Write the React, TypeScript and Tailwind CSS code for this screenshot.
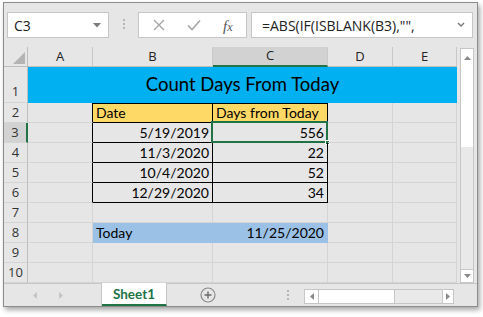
import clsx from "clsx";
import type { ReactNode } from "react";

const cellFont = "font-['Lato','Liberation_Sans',sans-serif] text-[14px] text-black";
const uiFont = "font-['Open_Sans','Noto_Sans',sans-serif]";

type CellProps = {
  w: string;
  cls?: string;
  right?: boolean;
  children?: ReactNode;
};

const Cell = ({ w, cls = "border-[#d4d4d4]", right, children }: CellProps) => (
  <div
    className={clsx(
      "relative flex h-full shrink-0 items-end whitespace-nowrap border-r border-b pb-[1px] leading-[17px]",
      cellFont,
      w,
      cls,
      right ? "justify-end pr-[3px]" : "justify-start pl-[3px]"
    )}
  >
    {children}
  </div>
);

const RowHead = ({ n, active }: { n: number; active?: boolean }) => (
  <div
    className={clsx(
      "flex h-full w-[24px] shrink-0 items-center justify-center border-b border-[#d4d4d4] text-[13px] text-[#333]",
      uiFont,
      active ? "border-r-2 border-r-[#217346] bg-[#d2d2d2]" : "border-r border-r-[#bdbdbd] bg-[#e6e6e6]"
    )}
  >
    {n}
  </div>
);

const ColHead = ({ w, label, active }: { w: string; label: string; active?: boolean }) => (
  <div
    className={clsx(
      "flex h-full shrink-0 items-center justify-center border-r border-r-[#c8c8c8] text-[13px] text-[#222]",
      uiFont,
      w,
      active ? "border-b-2 border-b-[#217346] bg-[#d2d2d2]" : "border-b border-b-[#bdbdbd] bg-[#e6e6e6]"
    )}
  >
    {label}
  </div>
);

const rows = [
  { n: 3, date: "5/19/2019", days: "556" },
  { n: 4, date: "11/3/2020", days: "22" },
  { n: 5, date: "10/4/2020", days: "52" },
  { n: 6, date: "12/29/2020", days: "34" },
];

const Dots = () => (
  <div className="flex w-[3px] flex-col gap-[2px]">
    <div className="h-[2px] w-[2px] bg-[#b5b5b5]" />
    <div className="h-[2px] w-[2px] bg-[#b5b5b5]" />
    <div className="h-[2px] w-[2px] bg-[#b5b5b5]" />
  </div>
);

export default function App() {
  return (
    <div className="h-[317px] w-[483px] overflow-hidden bg-white pl-[3px] pt-[2px]">
      <div className="flex h-[305px] w-[475px] flex-col border border-[#8c8c8c] bg-[#e6e6e6] shadow-[2px_3px_5px_rgba(0,0,0,0.35)]">
        {/* formula bar */}
        <div className="flex h-[44px] shrink-0 items-start pt-[9px]">
          <div className="ml-[3px] flex h-[26px] w-[102px] items-center justify-between border border-[#c6c6c6] bg-white pl-[6px] pr-[7px]">
            <span className={clsx("text-[14px] text-[#222]", uiFont)}>C3</span>
            <svg width="8" height="5" viewBox="0 0 8 5">
              <polygon points="0,0 8,0 4,4.5" fill="#7b7b7b" />
            </svg>
          </div>
          <div className="ml-[14px] mt-[7px]">
            <Dots />
          </div>
          <div className="relative ml-[12px] h-[26px] w-[109px] border border-[#c6c6c6] bg-white">
            <svg className="absolute left-[14px] top-[6px]" width="12" height="12" viewBox="0 0 12 12">
              <path d="M1 1 L11 11 M11 1 L1 11" stroke="#a6a6a6" strokeWidth="1.4" />
            </svg>
            <svg className="absolute left-[48px] top-[6px]" width="14" height="12" viewBox="0 0 14 12">
              <path d="M1 6.5 L5 10.5 L13 1.5" stroke="#a6a6a6" strokeWidth="1.6" fill="none" />
            </svg>
            <span className="absolute left-[84px] top-[2px] font-['Liberation_Serif',serif] text-[15px] italic text-[#555]">
              f<span className="text-[12px]">x</span>
            </span>
          </div>
          <div className="ml-[4px] flex h-[26px] w-[222px] items-center justify-between border border-[#c6c6c6] bg-white pl-[10px] pr-[7px]">
            <span className={clsx("whitespace-nowrap text-[14px] text-[#222]", uiFont)}>=ABS(IF(ISBLANK(B3),"",</span>
            <svg width="8" height="6" viewBox="0 0 8 6">
              <path d="M1 1 L4 4 L7 1" stroke="#7b7b7b" strokeWidth="1.5" fill="none" />
            </svg>
          </div>
        </div>

        {/* sheet */}
        <div className="flex h-[236px] shrink-0">
          <div className="flex w-[453px] flex-col">
            <div className="flex h-[20px] shrink-0">
              <div className="relative h-full w-[24px] shrink-0 border-r border-b border-[#bdbdbd] bg-[#e6e6e6]">
                <svg className="absolute bottom-[2px] right-[2px]" width="12" height="12" viewBox="0 0 12 12">
                  <polygon points="12,0 12,12 0,12" fill="#b4b4b4" />
                </svg>
              </div>
              <ColHead w="w-[65px]" label="A" />
              <ColHead w="w-[120px]" label="B" />
              <ColHead w="w-[115px]" label="C" active />
              <ColHead w="w-[65px]" label="D" />
              <ColHead w="w-[64px]" label="E" />
            </div>

            <div className="flex h-[36px] shrink-0">
              <div className="flex h-full w-[24px] shrink-0 items-end justify-center border-r border-b border-r-[#bdbdbd] border-b-[#d4d4d4] bg-[#e6e6e6] pb-[1px]">
                <span className={clsx("text-[13px] text-[#333]", uiFont)}>1</span>
              </div>
              <div className="flex h-full w-[429px] items-center justify-center bg-[#00b0f0] font-['Lato','Liberation_Sans',sans-serif] text-[18.5px] text-black">
                Count Days From Today
              </div>
            </div>

            <div className="flex h-[20px] shrink-0">
              <RowHead n={2} />
              <Cell w="w-[65px]" cls="border-[#d4d4d4] border-r-black" />
              <Cell w="w-[120px]" cls="border-black bg-[#ffd966] shadow-[inset_0_1px_0_#000]">Date</Cell>
              <Cell w="w-[115px]" cls="border-black bg-[#ffd966] shadow-[inset_0_1px_0_#000]">Days from Today</Cell>
              <Cell w="w-[65px]" />
              <Cell w="w-[64px]" />
            </div>

            {rows.map((r) => (
              <div key={r.n} className="flex h-[20px] shrink-0">
                <RowHead n={r.n} active={r.n === 3} />
                <Cell w="w-[65px]" cls="border-[#d4d4d4] border-r-black" />
                <Cell w="w-[120px]" cls="border-black" right>
                  {r.date}
                </Cell>
                <Cell w="w-[115px]" cls="border-black" right>
                  {r.days}
                  {r.n === 3 && (
                    <>
                      <div className="absolute -left-[2px] -top-[2px] h-[22px] w-[117px] border-2 border-[#217346]" />
                      <div className="absolute -bottom-[3px] -right-[3px] h-[5px] w-[5px] border border-white bg-[#217346]" />
                    </>
                  )}
                </Cell>
                <Cell w="w-[65px]" />
                <Cell w="w-[64px]" />
              </div>
            ))}

            <div className="flex h-[20px] shrink-0">
              <RowHead n={7} />
              <Cell w="w-[65px]" />
              <Cell w="w-[120px]" />
              <Cell w="w-[115px]" />
              <Cell w="w-[65px]" />
              <Cell w="w-[64px]" />
            </div>

            <div className="flex h-[20px] shrink-0">
              <RowHead n={8} />
              <Cell w="w-[65px]" />
              <Cell w="w-[120px]" cls="border-[#9bc2e6] bg-[#9bc2e6]">Today</Cell>
              <Cell w="w-[115px]" cls="border-[#9bc2e6] bg-[#9bc2e6]" right>
                11/25/2020
              </Cell>
              <Cell w="w-[65px]" />
              <Cell w="w-[64px]" />
            </div>

            {[9, 10].map((n) => (
              <div key={n} className="flex h-[20px] shrink-0">
                <RowHead n={n} />
                <Cell w="w-[65px]" />
                <Cell w="w-[120px]" />
                <Cell w="w-[115px]" />
                <Cell w="w-[65px]" />
                <Cell w="w-[64px]" />
              </div>
            ))}
          </div>

          {/* vertical scrollbar */}
          <div className="w-[20px] pl-[3px] pt-[1px]">
            <div className="flex h-[235px] w-[14px] flex-col border border-[#c6c6c6] bg-[#e9e9e9]">
              <div className="flex h-[18px] items-center justify-center bg-white">
                <svg width="7" height="4" viewBox="0 0 7 4">
                  <polygon points="0,4 7,4 3.5,0" fill="#8a8a8a" />
                </svg>
              </div>
              <div className="h-[80px] bg-white" />
              <div className="flex-1" />
              <div className="flex h-[13px] items-center justify-center border-t border-[#c6c6c6] bg-white">
                <svg width="7" height="4" viewBox="0 0 7 4">
                  <polygon points="0,0 7,0 3.5,4" fill="#8a8a8a" />
                </svg>
              </div>
            </div>
          </div>
        </div>

        {/* tab bar */}
        <div className="flex h-[23px] shrink-0">
          <div className="flex w-[98px] items-center gap-[22px] border-t border-r border-[#c6c6c6] pl-[29px]">
            <svg width="4" height="7" viewBox="0 0 4 7">
              <polygon points="4,0 4,7 0,3.5" fill="#c4c4c4" />
            </svg>
            <svg width="4" height="7" viewBox="0 0 4 7">
              <polygon points="0,0 0,7 4,3.5" fill="#c4c4c4" />
            </svg>
          </div>
          <div className="flex w-[65px] items-center justify-center border-r border-b-2 border-r-[#c6c6c6] border-b-[#217346] bg-white pt-[1px] font-['Lato','Liberation_Sans',sans-serif] text-[13.5px] font-bold text-[#217346]">
            Sheet1
          </div>
          <div className="flex flex-1 items-center border-t border-[#c6c6c6]">
            <svg className="ml-[33px]" width="16" height="16" viewBox="0 0 16 16">
              <circle cx="8" cy="8" r="7" fill="none" stroke="#8a8a8a" strokeWidth="1.2" />
              <path d="M4.5 8 H11.5 M8 4.5 V11.5" stroke="#6a6a6a" strokeWidth="1.4" />
            </svg>
            <div className="ml-[71px]">
              <Dots />
            </div>
            <div className="ml-[14px] mt-[2px] flex h-[15px] w-[150px] border border-[#c6c6c6] bg-[#e9e9e9]">
              <div className="flex w-[14px] items-center justify-center border-r border-[#c6c6c6] bg-white">
                <svg width="4" height="7" viewBox="0 0 4 7">
                  <polygon points="4,0 4,7 0,3.5" fill="#8a8a8a" />
                </svg>
              </div>
              <div className="w-[76px] border-r border-[#c6c6c6] bg-white" />
              <div className="flex-1" />
              <div className="flex w-[11px] items-center justify-center border-l border-[#c6c6c6] bg-white">
                <svg width="4" height="7" viewBox="0 0 4 7">
                  <polygon points="0,0 0,7 4,3.5" fill="#8a8a8a" />
                </svg>
              </div>
            </div>
          </div>
        </div>
      </div>
    </div>
  );
}
